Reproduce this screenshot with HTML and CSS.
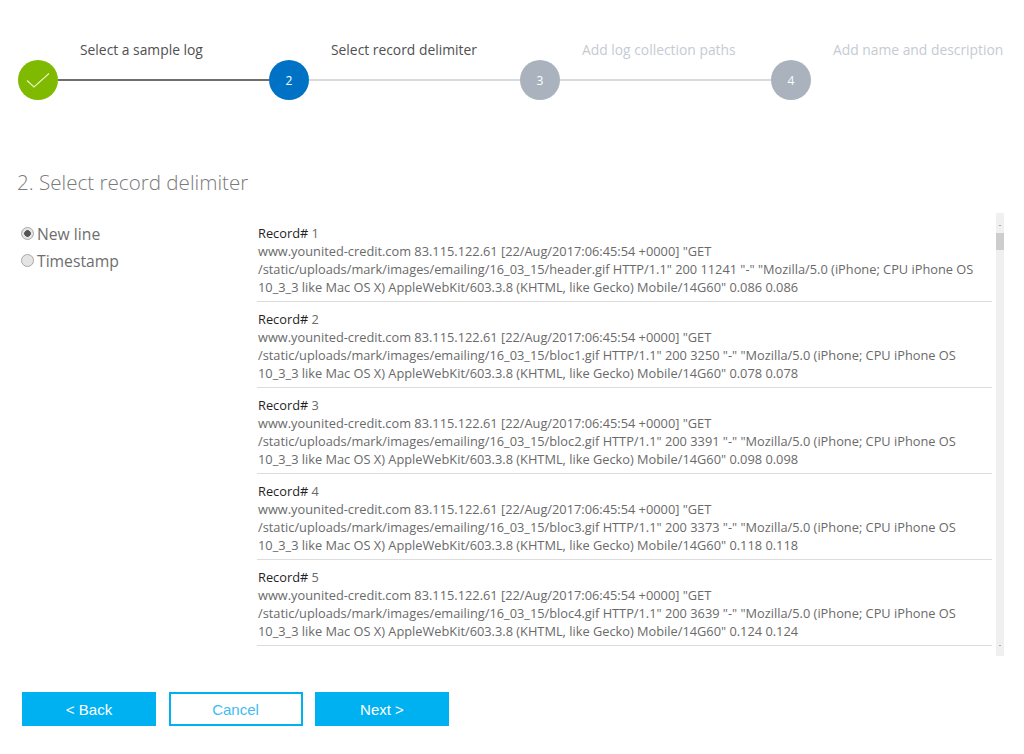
FILE: index.html
```html
<!DOCTYPE html>
<html lang="en">
<head>
<meta charset="utf-8">
<title>Select record delimiter</title>
<link rel="stylesheet" href="styles.css">
</head>
<body>
<ol class="stepper">
  <li class="step done">
    <span class="dot"><svg width="24" height="16" viewBox="0 0 24 16"><path d="M1 8.5l7 6.5L23 1.5" fill="none" stroke="#e8f4c8" stroke-width="1.1"/></svg></span>
    <div class="step-body"><span class="step-label">Select a sample log</span><span class="step-line"></span></div>
  </li>
  <li class="step current">
    <span class="dot">2</span>
    <div class="step-body"><span class="step-label">Select record delimiter</span><span class="step-line"></span></div>
  </li>
  <li class="step todo">
    <span class="dot">3</span>
    <div class="step-body"><span class="step-label">Add log collection paths</span><span class="step-line"></span></div>
  </li>
  <li class="step todo last">
    <span class="dot">4</span>
    <div class="step-body"><span class="step-label">Add name and description</span></div>
  </li>
</ol>

<h1 class="title">2. Select record delimiter</h1>

<div class="content">
  <div class="options">
    <label class="option"><input type="radio" name="delim" checked><span>New line</span></label>
    <label class="option"><input type="radio" name="delim"><span>Timestamp</span></label>
  </div>
  <div class="panel">
    <div class="records">
      <div class="record"><div class="record-title">Record# <span>1</span></div>www.younited-credit.com 83.115.122.61 [22/Aug/2017:06:45:54 +0000] "GET<br>/static/uploads/mark/images/emailing/16_03_15/header.gif HTTP/1.1" 200 11241 "-" "Mozilla/5.0 (iPhone; CPU iPhone OS<br>10_3_3 like Mac OS X) AppleWebKit/603.3.8 (KHTML, like Gecko) Mobile/14G60" 0.086 0.086</div>
      <div class="record"><div class="record-title">Record# <span>2</span></div>www.younited-credit.com 83.115.122.61 [22/Aug/2017:06:45:54 +0000] "GET<br>/static/uploads/mark/images/emailing/16_03_15/bloc1.gif HTTP/1.1" 200 3250 "-" "Mozilla/5.0 (iPhone; CPU iPhone OS<br>10_3_3 like Mac OS X) AppleWebKit/603.3.8 (KHTML, like Gecko) Mobile/14G60" 0.078 0.078</div>
      <div class="record"><div class="record-title">Record# <span>3</span></div>www.younited-credit.com 83.115.122.61 [22/Aug/2017:06:45:54 +0000] "GET<br>/static/uploads/mark/images/emailing/16_03_15/bloc2.gif HTTP/1.1" 200 3391 "-" "Mozilla/5.0 (iPhone; CPU iPhone OS<br>10_3_3 like Mac OS X) AppleWebKit/603.3.8 (KHTML, like Gecko) Mobile/14G60" 0.098 0.098</div>
      <div class="record"><div class="record-title">Record# <span>4</span></div>www.younited-credit.com 83.115.122.61 [22/Aug/2017:06:45:54 +0000] "GET<br>/static/uploads/mark/images/emailing/16_03_15/bloc3.gif HTTP/1.1" 200 3373 "-" "Mozilla/5.0 (iPhone; CPU iPhone OS<br>10_3_3 like Mac OS X) AppleWebKit/603.3.8 (KHTML, like Gecko) Mobile/14G60" 0.118 0.118</div>
      <div class="record"><div class="record-title">Record# <span>5</span></div>www.younited-credit.com 83.115.122.61 [22/Aug/2017:06:45:54 +0000] "GET<br>/static/uploads/mark/images/emailing/16_03_15/bloc4.gif HTTP/1.1" 200 3639 "-" "Mozilla/5.0 (iPhone; CPU iPhone OS<br>10_3_3 like Mac OS X) AppleWebKit/603.3.8 (KHTML, like Gecko) Mobile/14G60" 0.124 0.124</div>
    </div>
    <div class="scrollbar">
      <span class="arrow"></span>
      <span class="thumb"></span>
      <span class="arrow arrow-down"></span>
    </div>
  </div>
</div>

<div class="actions">
  <button class="btn">&lt; Back</button>
  <button class="btn btn-outline">Cancel</button>
  <button class="btn">Next &gt;</button>
</div>
</body>
</html>
```
FILE: styles.css
```css
* { box-sizing: border-box; }
html, body { margin: 0; padding: 0; background: #fff; }
body {
  width: 1024px;
  height: 754px;
  overflow: hidden;
  font-family: "Open Sans", "Noto Sans", sans-serif;
  color: #6a6a6a;
}

.stepper {
  list-style: none;
  margin: 0;
  padding: 42px 0 0 18px;
  display: flex;
  height: 100px;
}
.step { flex: 0 0 251px; display: flex; align-items: flex-end; height: 58px; }
.dot {
  flex: 0 0 40px;
  width: 40px;
  height: 40px;
  border-radius: 50%;
  display: flex;
  align-items: center;
  justify-content: center;
  font-size: 12px;
  color: #fff;
}
.done .dot { background: #7fba00; }
.current .dot { background: #0072c6; }
.todo .dot { background: #a9b2bd; }
.step-body {
  flex: 1;
  height: 58px;
  display: flex;
  flex-direction: column;
  min-width: 0;
}
.step-label {
  padding-left: 22px;
  margin-top: -1px;
  font-size: 13.85px;
  line-height: 18px;
  white-space: nowrap;
  color: #505050;
}
.todo .step-label { color: #c5cbd3; }
.step-line { height: 2px; margin-top: 20px; background: #d5dae1; }
.done .step-line { background: #6e6e6e; }

.title {
  margin: 68px 0 0 17px;
  font-size: 20.6px;
  line-height: 28px;
  font-weight: 300;
  color: #7a7a7a;
}

.content { display: flex; margin-top: 17px; height: 444px; }
.options { flex: 0 0 257px; padding: 7px 0 0 21px; }
.option { display: flex; align-items: center; height: 27px; font-size: 15.7px; color: #6e6e6e; }
.option input {
  appearance: none;
  width: 13px;
  height: 13px;
  margin: 0 3px 0 0;
  border: 1px solid #a8a8a8;
  border-radius: 50%;
  background: #e4e4e4;
}
.option input:checked { background: radial-gradient(circle, #555 0 3px, #e4e4e4 3.6px); }

.panel { flex: 0 0 747px; display: flex; height: 443px; }
.records { flex: 0 0 735px; overflow: hidden; padding-top: 3.65px; font-size: 12.8px; line-height: 18px; }
.record {
  height: 85.8px;
  padding: 7.75px 0 6px 1px;
  border-bottom: 1px solid #dcdcdc;
  white-space: nowrap;
}
.record-title { color: #1f1f1f; }
.record-title span { color: #6a6a6a; }

.scrollbar {
  flex: 0 0 8px;
  margin-left: 4px;
  background: #f0f0f0;
  display: flex;
  flex-direction: column;
  align-items: center;
  padding-top: 12px;
}
.arrow { width: 0; height: 0; border: 1.5px solid transparent; border-bottom-color: #606060; border-top: 0; }
.arrow-down { margin-top: auto; margin-bottom: 10px; border-bottom: 0; border-top: 1.5px solid #606060; }
.thumb { width: 8px; height: 17px; margin-top: 7px; background: #cdcdcd; }

.actions { display: flex; gap: 12.5px; padding: 35px 0 0 22px; }
.btn {
  width: 134px;
  height: 34px;
  padding: 0;
  border: 2px solid #00b1f1;
  border-radius: 0;
  background: #00b1f1;
  color: #fff;
  font-family: "Liberation Sans", Arial, sans-serif;
  font-size: 15px;
}
.btn-outline { background: #fff; color: #3fbcf2; }
```
